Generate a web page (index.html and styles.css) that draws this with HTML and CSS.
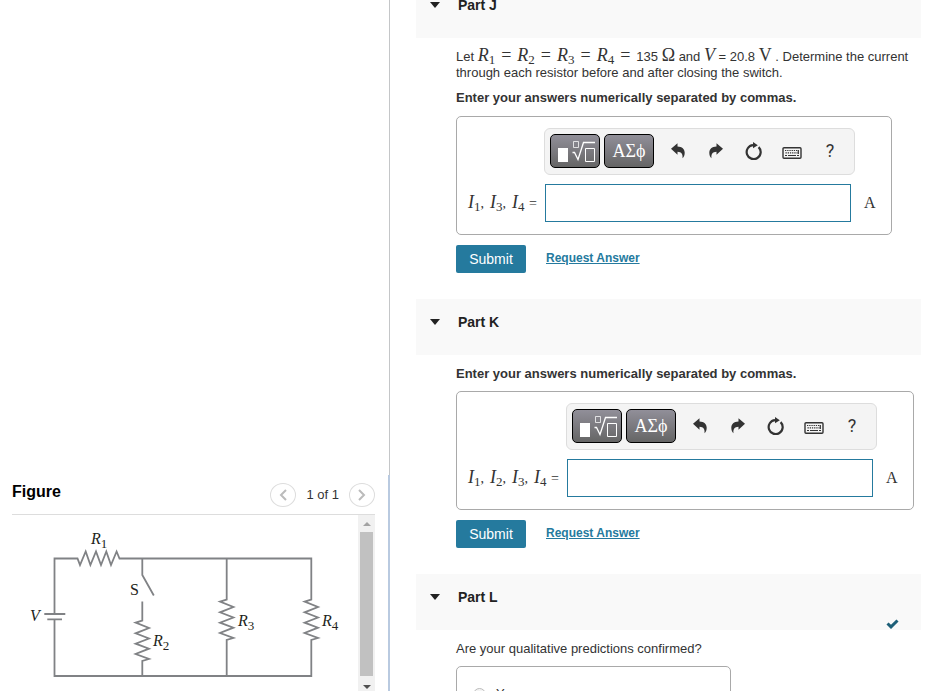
FILE: index.html
```html
<!DOCTYPE html>
<html lang="en">
<head>
  <meta charset="UTF-8">
  <title>Circuits</title>
  <link rel="stylesheet" href="styles.css">
</head>
<body>
  <!-- icons shared by both answer toolbars -->
  <svg class="sprite" aria-hidden="true">
    <symbol id="i-template" viewBox="0 0 48 32">
      <rect x="7" y="13" width="10" height="14" fill="#fff"/>
      <g fill="none" stroke="#fff">
        <path d="M22.5 6.5h5v6h-5z" stroke-opacity=".75"/>
        <path d="M21.500 17.500h2l3.500 7 5.500-17h11.500" stroke-width="1.300"/>
        <path d="M34.500 13.500h9v13h-9z"/>
      </g>
    </symbol>
    <symbol id="i-undo" viewBox="0 0 16 16">
      <path d="M1 5.800 7.500 .2v3.200c4.600.2 7.200 2.600 7.200 6.300 0 2.300-.8 4.200-2.200 5.600.5-3.900-.9-6.400-5-6.500v3z" fill="#333"/>
    </symbol>
    <symbol id="i-reset" viewBox="0 0 18 18">
      <path d="M13.600 5.100a7 7 0 1 1-5.600-2" fill="none" stroke="#333" stroke-width="2.200"/>
      <path d="M8 0 12.800 3.300 8 6.200z" fill="#333"/>
    </symbol>
    <symbol id="i-keyboard" viewBox="0 0 20 12">
      <rect x="1" y=".7" width="18" height="10.600" rx="1" fill="none" stroke="#333" stroke-width="1.400"/>
      <path d="M3 3.500h13M3.500 5.800h12" stroke="#333" stroke-width="1.200" stroke-dasharray="1.300 .9"/>
      <path d="M3 8.500h2M6 8.500h8M15 8.500h2M16.300 3v4" stroke="#333" stroke-width="1.200"/>
    </symbol>
  </svg>

  <div class="page">
    <aside class="left">
      <section class="figure">
        <div class="figure-head">
          <h2>Figure</h2>
          <div class="pager">
            <button class="page-btn" aria-label="Previous figure"><svg width="8" height="12" viewBox="0 0 8 12"><path d="M7 1 2 6l5 5"/></svg></button>
            <span>1 of 1</span>
            <button class="page-btn" aria-label="Next figure"><svg width="8" height="12" viewBox="0 0 8 12"><path d="M1 1l5 5-5 5"/></svg></button>
          </div>
        </div>
        <div class="figure-body">
          <svg class="circuit" width="346" height="176" viewBox="12 515 346 176">
            <symbol id="resistor" viewBox="-10 0 20 42" width="20" height="42">
              <path d="M0 0v.5L-6.700 2.700 6.700 8-6.700 13.300 6.700 18.500-6.700 23.700 6.700 28.700-6.700 34 6.700 39 0 41v1" fill="none" stroke="#808285" stroke-width="1.800"/>
            </symbol>
            <g fill="none" stroke="#808285" stroke-width="1.800">
              <path d="M54.500 614V558.500H77.500l2.500 6.500 5.700-13.500 4.700 13.500 5.600-13.500 5 13.500 5.300-13.500 4.700 13.500 5.600-13.500 2.900 7H311.300V599"/>
              <path d="M54.500 619.500V676H311.300V641"/>
              <path d="M44.300 614h21M47.300 619.300h14.700"/>
              <path d="M142.300 558.500v16.500l11.500 20.500M142.300 601.500v18.500M142.300 662v14"/>
              <path d="M226.700 558.500V599M226.700 641v35"/>
            </g>
            <use href="#resistor" x="132.300" y="620"/>
            <use href="#resistor" x="216.700" y="599"/>
            <use href="#resistor" x="301.300" y="599"/>
            <g class="circuit-label">
              <text x="91" y="544"><tspan class="it">R</tspan><tspan class="sub" dy="4">1</tspan></text>
              <text x="30" y="621"><tspan class="it">V</tspan></text>
              <text x="130" y="595">S</text>
              <text x="153" y="646"><tspan class="it">R</tspan><tspan class="sub" dy="4">2</tspan></text>
              <text x="238" y="626"><tspan class="it">R</tspan><tspan class="sub" dy="4">3</tspan></text>
              <text x="322" y="626"><tspan class="it">R</tspan><tspan class="sub" dy="4">4</tspan></text>
            </g>
          </svg>
          <div class="scrollbar">
            <span class="arrow up"></span>
            <span class="thumb"></span>
            <span class="arrow down"></span>
          </div>
        </div>
      </section>
    </aside>

    <main class="right">
      <section class="part">
        <button class="part-head"><span class="caret"></span>Part J</button>
        <div class="part-body">
          <p>Let <span class="math"><i>R</i><sub>1</sub><b>=</b><i>R</i><sub>2</sub><b>=</b><i>R</i><sub>3</sub><b>=</b><i>R</i><sub>4</sub><b>=</b></span>135 <span class="math">Ω</span> and <span class="math"><i>V</i></span> = 20.8 <span class="math">V</span> . Determine the current through each resistor before and after closing the switch.</p>
          <p class="strong">Enter your answers numerically separated by commas.</p>
          <div class="answer">
            <label class="answer-label" for="ansJ">
              <span class="term"><i>I</i><sub>1</sub>,</span><span class="term"><i>I</i><sub>3</sub>,</span><span class="term"><i>I</i><sub>4</sub></span>=
            </label>
            <div class="toolbar">
              <button class="dark-btn" aria-label="Templates"><svg width="48" height="32"><use href="#i-template"/></svg></button>
              <button class="dark-btn">ΑΣϕ</button>
              <div class="tools">
                <button aria-label="Undo"><svg width="16" height="16"><use href="#i-undo"/></svg></button>
                <button aria-label="Redo"><svg class="flip" width="16" height="16"><use href="#i-undo"/></svg></button>
                <button aria-label="Reset"><svg width="18" height="18"><use href="#i-reset"/></svg></button>
                <button class="kbd" aria-label="Keyboard"><svg width="20" height="12"><use href="#i-keyboard"/></svg></button>
                <button>?</button>
              </div>
            </div>
            <input class="field" id="ansJ" type="text">
            <span class="unit">A</span>
          </div>
          <div class="actions">
            <button class="submit">Submit</button>
            <a href="#">Request Answer</a>
          </div>
        </div>
      </section>

      <section class="part">
        <button class="part-head"><span class="caret"></span>Part K</button>
        <div class="part-body">
          <p class="strong">Enter your answers numerically separated by commas.</p>
          <div class="answer">
            <label class="answer-label" for="ansK">
              <span class="term"><i>I</i><sub>1</sub>,</span><span class="term"><i>I</i><sub>2</sub>,</span><span class="term"><i>I</i><sub>3</sub>,</span><span class="term"><i>I</i><sub>4</sub></span>=
            </label>
            <div class="toolbar">
              <button class="dark-btn" aria-label="Templates"><svg width="48" height="32"><use href="#i-template"/></svg></button>
              <button class="dark-btn">ΑΣϕ</button>
              <div class="tools">
                <button aria-label="Undo"><svg width="16" height="16"><use href="#i-undo"/></svg></button>
                <button aria-label="Redo"><svg class="flip" width="16" height="16"><use href="#i-undo"/></svg></button>
                <button aria-label="Reset"><svg width="18" height="18"><use href="#i-reset"/></svg></button>
                <button class="kbd" aria-label="Keyboard"><svg width="20" height="12"><use href="#i-keyboard"/></svg></button>
                <button>?</button>
              </div>
            </div>
            <input class="field" id="ansK" type="text">
            <span class="unit">A</span>
          </div>
          <div class="actions">
            <button class="submit">Submit</button>
            <a href="#">Request Answer</a>
          </div>
        </div>
      </section>

      <section class="part">
        <button class="part-head"><span class="caret"></span>Part L
          <svg class="done" width="13" height="10" viewBox="0 0 13 10"><path d="M1.500 4.500 5 7.800 11.500 1.500" fill="none" stroke="#1d5f78" stroke-width="3"/></svg>
        </button>
        <div class="part-body">
          <p>Are your qualitative predictions confirmed?</p>
          <div class="choices">
            <input type="radio" name="confirm" id="yes">
            <label for="yes">Yes</label>
            <input type="radio" name="confirm" id="no">
            <label for="no">No</label>
          </div>
        </div>
      </section>
    </main>
  </div>
</body>
</html>
```
FILE: styles.css
```css
* {
  box-sizing: border-box;
}

body {
  margin: 0;
  background: #fff;
  color: #333;
  font: 13px/16px "Liberation Sans", Arial, sans-serif;
}

button {
  padding: 0;
  border: 0;
  background: none;
  color: inherit;
  font: inherit;
  cursor: pointer;
}

h2, p {
  margin: 0;
}

.sprite {
  display: none;
}

.page {
  display: flex;
  height: 100vh;
  overflow: hidden;
}

/* left column */
.left {
  display: flex;
  flex: 0 0 390px;
  flex-direction: column;
  justify-content: flex-end;
  border-right: 1px solid #c4c6c8;
}

.figure {
  height: 216px;
  margin-right: -1px;
  padding: 0 13px 0 12px;
  border-right: 2px solid #b9cae0;
}

.figure-head {
  display: flex;
  align-items: center;
  justify-content: space-between;
  height: 40px;
  border-bottom: 1px solid #ddd;
}

.figure-head h2 {
  padding-bottom: 6px;
  color: #000;
  font-size: 16px;
  line-height: 20px;
}

.pager {
  display: flex;
  align-items: center;
  gap: 10px;
}

.page-btn {
  display: flex;
  align-items: center;
  justify-content: center;
  width: 26px;
  height: 24px;
  border: 1px solid #ddd;
  border-radius: 50%;
}

.page-btn path {
  fill: none;
  stroke: #bbb;
  stroke-width: 2;
}

.figure-body {
  display: flex;
  justify-content: space-between;
}

.circuit-label {
  fill: #231f20;
  font-family: "Liberation Serif", "Times New Roman", serif;
  font-size: 16px;
}

.it {
  font-style: italic;
}

.sub {
  font-size: 13px;
}

.scrollbar {
  display: flex;
  flex: 0 0 17px;
  flex-direction: column;
  align-items: center;
  background: #f1f1f1;
}

.thumb {
  flex: 1;
  width: 13px;
  background: #c1c1c1;
}

.arrow {
  display: flex;
  align-items: center;
  justify-content: center;
  height: 17px;
}

.arrow::before {
  content: "";
  border: 4px solid transparent;
}

.up::before {
  border-top: 0;
  border-bottom-color: #a3a3a3;
}

.down {
  height: 15px;
  padding-top: 6px;
}

.down::before {
  border-bottom: 0;
  border-top-color: #505050;
}

/* right column */
.right {
  flex: 1;
  margin-top: -18px;
  padding: 0 23px 0 26px;
}

.part-head {
  display: flex;
  width: 100%;
  height: 56px;
  padding: 15px 22px 1px 14px;
  background: #f9f9f9;
  color: #222;
  font-size: 14px;
  font-weight: bold;
}

.caret {
  margin: 5px 18px 0 0;
  border: 5px solid transparent;
  border-top: 6px solid #222;
  border-bottom: 0;
}

.done {
  align-self: flex-end;
  margin-left: auto;
}

.part-body {
  display: flex;
  flex-direction: column;
  align-items: flex-start;
  gap: 10px;
  padding: 11px 0 26px 40px;
}

.part-body p + * {
  margin-top: -1px;
}

.part-body .strong + .answer {
  margin-top: -1px;
}

.part-body p + .strong {
  margin-bottom: 1px;
}

.strong {
  font-weight: bold;
}

.math,
.answer-label,
.unit {
  font-family: "Liberation Serif", "Times New Roman", serif;
}

.math {
  font-size: 18px;
  line-height: 0;
}

.math b {
  margin: 0 6px;
  font-weight: normal;
}

sub {
  font-size: 13px;
  line-height: 0;
  vertical-align: -3px;
}

.answer {
  display: grid;
  grid-template-columns: auto auto auto;
  row-gap: 9px;
  align-items: center;
  padding: 11px 16px 12px 11px;
  border: 1px solid #a9a9a9;
  border-radius: 5px;
}

.toolbar {
  display: flex;
  grid-column: 2;
  gap: 4px;
  height: 47px;
  padding: 5px;
  border: 1px solid #ddd;
  border-radius: 6px;
  background: #f4f4f4;
}

.dark-btn {
  display: flex;
  align-items: center;
  justify-content: center;
  width: 50px;
  height: 34px;
  border: 1px solid #000;
  border-radius: 5px;
  background: linear-gradient(#918f99, #656565);
  color: #fff;
  font: 18px/20px "Liberation Serif", "Times New Roman", serif;
}

.tools {
  display: flex;
  margin-left: 1px;
}

.tools button {
  display: flex;
  align-items: center;
  justify-content: center;
  width: 38px;
  padding-bottom: 1px;
  font: 18px/20px Roboto, sans-serif;
}

.tools .kbd {
  padding-top: 3px;
}

.flip {
  transform: scaleX(-1);
}

.answer-label {
  grid-row: 2;
  padding-right: 7px;
  font-size: 14px;
  white-space: nowrap;
}

.answer-label i {
  font-size: 18px;
}

.term {
  display: inline-block;
  width: 22px;
}

.term:last-child {
  width: 17px;
}

.field {
  grid-row: 2;
  grid-column: 2;
  width: 306px;
  height: 38px;
  margin-left: 1px;
  border: 1px solid #257a9e;
  background: #fff;
}

.unit {
  grid-row: 2;
  margin-left: 9px;
  font-size: 16px;
}

.actions {
  display: flex;
  gap: 20px;
}

.submit {
  width: 70px;
  height: 28px;
  border-radius: 2px;
  background: #257a9e;
  color: #fff;
  font-size: 14px;
}

.actions a {
  padding-top: 5px;
  color: #257a9e;
  font-size: 12px;
  font-weight: bold;
}

.choices {
  display: grid;
  grid-template-columns: auto 1fr;
  gap: 10px;
  width: 275px;
  padding: 19px 16px;
  border: 1px solid #a9a9a9;
  border-radius: 5px;
}

.choices input {
  width: 13px;
  height: 13px;
  margin: 2px 0 0;
  appearance: none;
  border: 1px solid #bbb;
  border-radius: 50%;
  background: #f4f4f4;
}

.choices input:checked {
  background: #257a9e;
}
```
